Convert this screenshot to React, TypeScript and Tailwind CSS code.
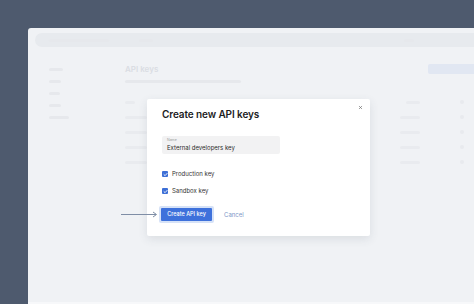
import { X } from "lucide-react";

const sideItems = [14, 12, 11, 12, 20];

function Bar({ w, className = "" }: { w: number; className?: string }) {
  return <div className={`h-[3px] rounded-full bg-[#e6e8ec] ${className}`} style={{ width: w }} />;
}

function Check() {
  return (
    <span className="w-[6px] h-[6px] rounded-[1px] bg-[#3d6fd6] flex items-center justify-center">
      <svg width="5" height="5" viewBox="0 0 10 10" fill="none">
        <path d="M2 5.2 L4.2 7.3 L8.2 2.8" stroke="white" strokeWidth="1.8" strokeLinecap="round" strokeLinejoin="round" />
      </svg>
    </span>
  );
}

export default function App() {
  return (
    <div className="w-[474px] h-[304px] bg-[#4e5a6e] pt-[28px] pl-[28px] overflow-hidden font-['Inter',sans-serif]">
      <div className="relative h-[276px] bg-[#f0f2f5] rounded-tl-[3px] border-b-2 border-[#f7f8fa] flex flex-col">
        {/* faded top bar */}
        <div className="mt-[5px] ml-[7px] h-[14px] rounded-l-full bg-[#e7eaee] flex items-center pl-[14px] gap-[30px]">
          <Bar w={60} className="bg-[#e2e5ea]" />
          <Bar w={14} className="bg-[#dfe2e7]" />
          <div className="flex-1" />
          <Bar w={10} className="bg-[#dfe2e7] mr-[60px]" />
        </div>

        <div className="flex flex-1">
          {/* faded sidebar */}
          <div className="w-[97px] pl-[21px] pt-[21px] flex flex-col gap-[9px]">
            {sideItems.map((w, i) => (
              <Bar key={i} w={w} />
            ))}
          </div>

          {/* faded main */}
          <div className="flex-1 pt-[17px]">
            <div className="flex items-center justify-between">
              <span className="text-[8px] font-semibold text-[#dadde3] leading-none">API keys</span>
              <div className="w-[46px] h-[10px] rounded-l-[2px] bg-[#e1e7f2]" />
            </div>
            <Bar w={116} className="mt-[6px]" />
            <div className="mt-[17px] pr-[10px] flex flex-col gap-[11px]">
              {[0, 1, 2, 3, 4].map((i) => (
                <div key={i} className="flex items-center justify-between">
                  <Bar w={i === 0 ? 10 : 22} className="bg-[#e9ebef]" />
                  <div className="flex items-center gap-[40px]">
                    <Bar w={i === 0 ? 14 : 20} className="bg-[#e9ebef]" />
                    <div className="w-[4px] h-[4px] rounded-full bg-[#e8eaee]" />
                  </div>
                </div>
              ))}
            </div>
          </div>
        </div>

        {/* modal */}
        <div className="absolute left-[119px] top-[71px] w-[223px] h-[137px] bg-white rounded-[2px] shadow-[0_3px_10px_rgba(60,70,90,0.12)] pl-[15px] pt-[10px]">
          <X className="absolute right-[7px] top-[6px] text-[#666] w-[5px] h-[5px]" strokeWidth={3} />
          <div className="text-[10px] font-semibold text-[#1c1c1e] leading-none tracking-[-0.1px]">
            Create new API keys
          </div>
          <div className="mt-[17px] w-[118px] h-[18px] bg-[#f2f2f3] rounded-[2px] pl-[5px] pt-[3px]">
            <div className="text-[3.5px] text-[#9a9a9a] leading-none">Name</div>
            <div className="text-[6px] text-[#2a2a2a] leading-none mt-[2px]">External developers key</div>
          </div>
          <div className="mt-[17px] flex items-center gap-[4px]">
            <Check />
            <span className="text-[6px] text-[#333] leading-none">Production key</span>
          </div>
          <div className="mt-[11px] flex items-center gap-[4px]">
            <Check />
            <span className="text-[6px] text-[#333] leading-none">Sandbox key</span>
          </div>
          <div className="mt-[12px] -ml-[3px] flex items-center gap-[10px]">
            <div className="p-[2px] bg-[#d6e2f7] rounded-[2px]">
              <div className="w-[51px] h-[13px] bg-[#3e71db] rounded-[1px] flex items-center justify-center text-[5.5px] text-white font-medium leading-none">
                Create API key
              </div>
            </div>
            <span className="text-[6px] text-[#7d97c7] leading-none">Cancel</span>
          </div>
        </div>

        {/* arrow */}
        <svg className="absolute left-[92px] top-[183px]" width="38" height="7" viewBox="0 0 38 7" fill="none">
          <path d="M1 3.5 H36" stroke="#7f8ea6" strokeWidth="1" />
          <path d="M33 1 L36.5 3.5 L33 6" stroke="#7f8ea6" strokeWidth="1" fill="none" />
        </svg>
      </div>
    </div>
  );
}
